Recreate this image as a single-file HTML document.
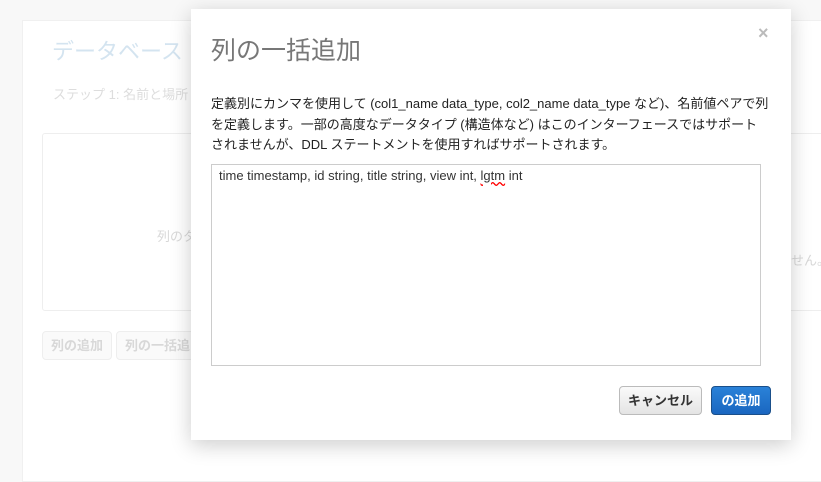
<!DOCTYPE html>
<html><head><meta charset="utf-8"><style>
body{margin:0;width:821px;height:463px;overflow:hidden;background:#f8f8f8;font-family:"Liberation Sans","Noto Sans CJK JP",sans-serif;position:relative}
.panel{position:absolute;left:22px;top:20px;width:820px;height:460px;background:#fff;border:1px solid #f0f0f0}
.a{position:absolute;white-space:nowrap}
.modal{position:absolute;left:191px;top:9px;width:600px;height:431px;background:#fff;box-shadow:0 5px 20px rgba(0,0,0,.2)}
.btn{position:absolute;border-radius:4px;font-size:13px;font-weight:bold;text-align:center;box-sizing:border-box}
</style></head><body>
<div class="panel"></div>
<div class="a" style="left:52px;top:34px;font-size:22px;color:#d4e4f0">データベース ＞</div>
<div class="a" style="left:53px;top:84px;font-size:13px;color:#ddd">ステップ 1: 名前と場所</div>
<div style="position:absolute;left:42px;top:133px;width:800px;height:176px;border:1px solid #eee;border-radius:3px"></div>
<div class="a" style="left:157px;top:226px;font-size:13px;color:#d8d8d8">列のタ</div>
<div class="a" style="left:791px;top:250px;font-size:13px;color:#d8d8d8">せん。</div>
<div class="btn" style="left:42px;top:331px;width:70px;height:29px;line-height:27px;border:1px solid #eee;background:#fafafa;color:#d8d8d8">列の追加</div>
<div class="btn" style="left:116px;top:331px;width:90px;height:29px;line-height:27px;border:1px solid #eee;background:#fafafa;color:#d8d8d8;text-align:left;padding-left:8px">列の一括追</div>
<div class="modal">
<div class="a" style="left:20px;top:22px;font-size:25px;color:#777">列の一括追加</div>
<div class="a" style="left:567px;top:14px;font-size:18px;color:#bbb;font-weight:bold">×</div>
<div class="a" style="left:20px;top:85px;font-size:13px;line-height:20.5px;color:#222">定義別にカンマを使用して (col1_name data_type, col2_name data_type など)、名前値ペアで列<br>を定義します。一部の高度なデータタイプ (構造体など) はこのインターフェースではサポート<br>されませんが、DDL ステートメントを使用すればサポートされます。</div>
<div style="position:absolute;left:20px;top:155px;width:548px;height:200px;border:1px solid #ccc"></div>
<div class="a" style="left:28px;top:159px;font-size:13px;color:#333">time timestamp, id string, title string, view int, <span style="text-decoration:underline wavy red">lgtm</span> int</div>
<div class="btn" style="left:428px;top:377px;width:83px;height:29px;line-height:27px;border:1px solid #bbb;background:linear-gradient(#fafafa,#e4e4e4);color:#333">キャンセル</div>
<div class="btn" style="left:520px;top:377px;width:60px;height:29px;line-height:27px;border:1px solid #1a4f8a;background:linear-gradient(#2a82d8,#1a66c0);color:#fff">の追加</div>
</div>
</body></html>
